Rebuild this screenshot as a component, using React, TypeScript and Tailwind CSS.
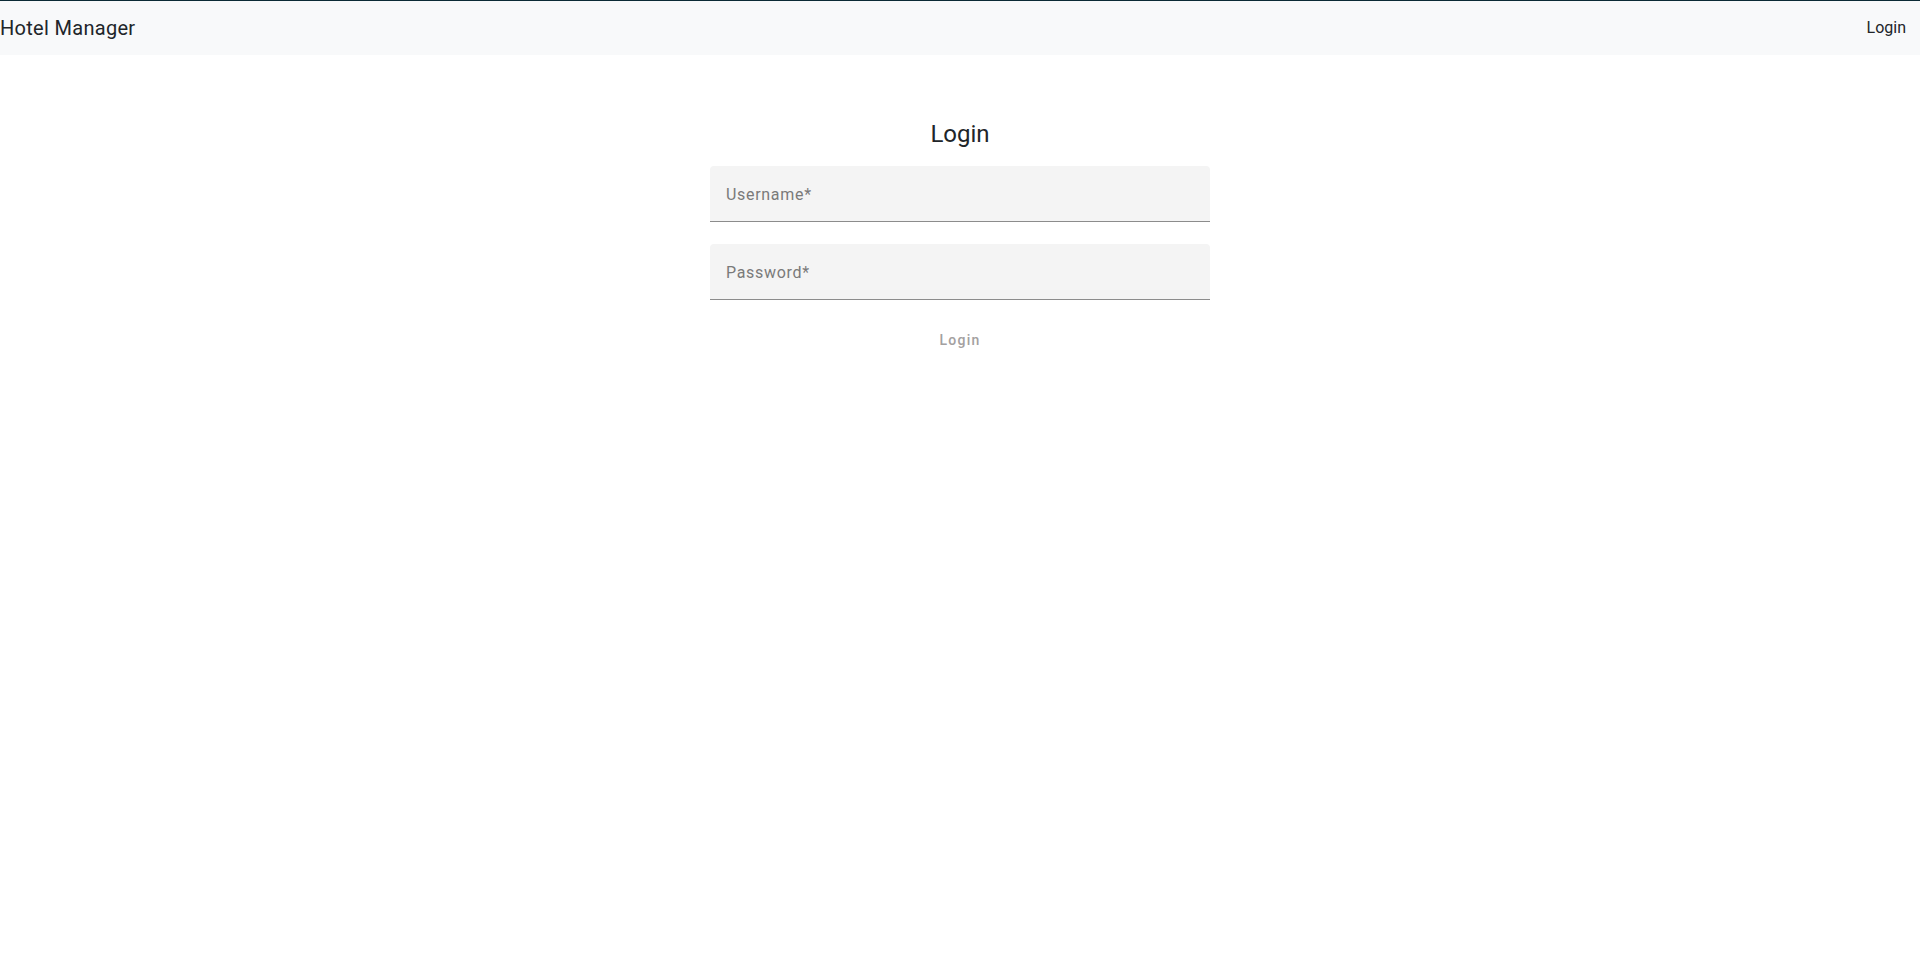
export default function App() {
  return (
    <div className="min-h-screen bg-white font-['Roboto',sans-serif] text-[#212529]">
      {/* Top navbar */}
      <nav className="flex h-[55px] items-center justify-between border-t border-[#0b2a35] bg-[#f8f9fa] pr-[14px]">
        <a className="text-[20px] leading-[30px] tracking-[0.3px] text-[#212529]">Hotel Manager</a>
        <a className="text-[16px] leading-6 text-[#212529]">Login</a>
      </nav>

      {/* Login form */}
      <main className="flex flex-col items-center pt-[65px]">
        <h2 className="text-[24px] leading-[29px] text-[#212529]">Login</h2>
        <form className="mt-[17px] flex w-[500px] flex-col">
          <div className="pb-[22px]">
            <div className="flex h-[56px] items-center rounded-t-[4px] border-b border-[#8c8c8c] bg-[#f4f4f4] px-4 pt-[2px]">
              <span className="text-[16px] tracking-[0.7px] text-[#7a7a7a]">Username*</span>
            </div>
          </div>
          <div className="pb-[22px]">
            <div className="flex h-[56px] items-center rounded-t-[4px] border-b border-[#8c8c8c] bg-[#f4f4f4] px-4 pt-[2px]">
              <span className="text-[16px] tracking-[0.7px] text-[#7a7a7a]">Password*</span>
            </div>
          </div>
          <div className="flex justify-center">
            <button
              type="button"
              disabled
              className="h-9 px-4 text-[14px] font-medium tracking-[1.25px] text-[#a3a0a0]"
            >
              Login
            </button>
          </div>
        </form>
      </main>
    </div>
  )
}
